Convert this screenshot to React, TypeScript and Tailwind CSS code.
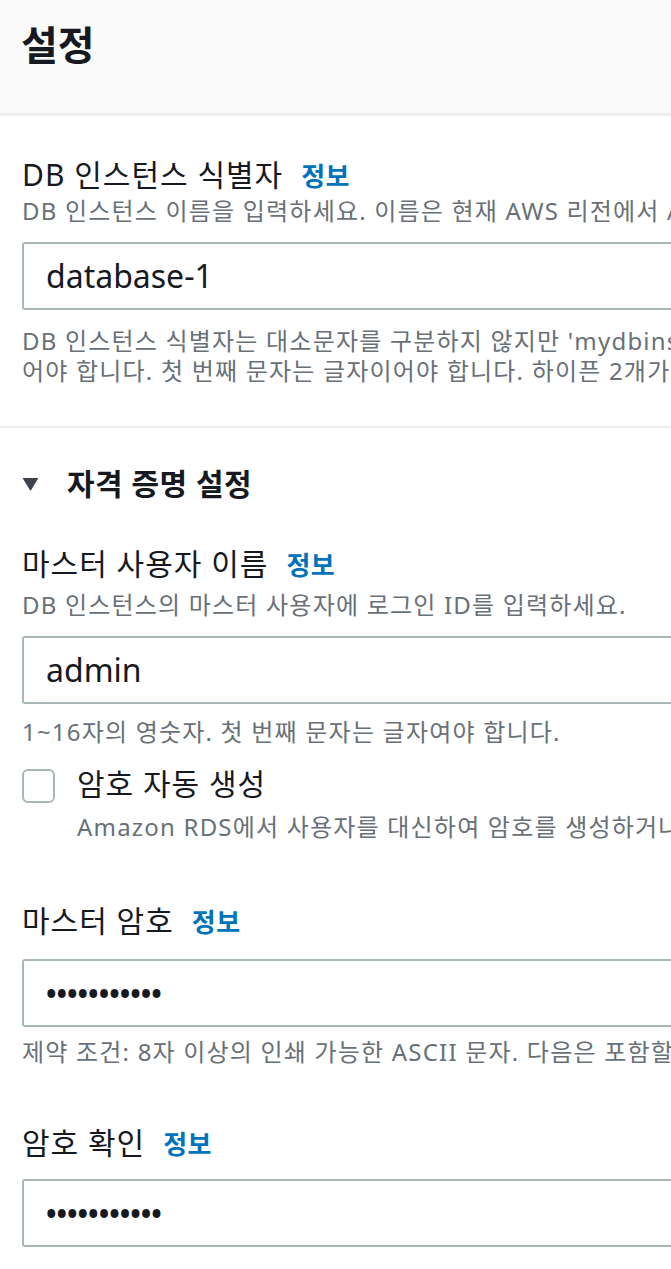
import React from 'react';

const font = { fontFamily: '"Noto Sans", "Noto Sans CJK KR", sans-serif' };

const Info = () => (
  <span className="ml-[18px] text-[26px] tracking-[0.5px] font-bold text-[#0073bb]">정보</span>
);

const Field: React.FC<{ value: string; dots?: boolean }> = ({ value, dots }) => (
  <div className="w-[720px] h-[68px] border-2 border-[#aab7b8] rounded-[3px] bg-white flex items-center pl-[22px]">
    <span
      className={
        dots
          ? 'text-[28px] leading-none text-[#16191f] font-bold'
          : 'text-[32px] leading-none text-[#16191f]'
      }
    >
      {value}
    </span>
  </div>
);

const Label: React.FC<{ children: React.ReactNode; className?: string }> = ({ children, className }) => (
  <div className={`text-[30px] tracking-[1px] leading-[32px] text-[#16191f] flex items-baseline ${className ?? ''}`}>
    {children}
  </div>
);

const Hint: React.FC<{ children: React.ReactNode; className?: string }> = ({ children, className }) => (
  <p className={`text-[24px] tracking-[1.2px] leading-[28px] text-[#687078] ${className ?? ''}`}>{children}</p>
);

export default function App() {
  return (
    <div className="w-[671px] h-[1269px] overflow-hidden bg-white" style={font}>
      <header className="h-[116px] bg-[#fafafa] border-b-[3px] border-[#eeeeee] pl-[21px] pt-[23px]">
        <h1 className="text-[40px] leading-[44px] font-bold text-[#16191f]">설정</h1>
      </header>

      <div className="pl-[22px] whitespace-nowrap">
        <Label className="mt-[43px]">
          DB 인스턴스 식별자 <Info />
        </Label>
        <Hint className="mt-[5px]">
          DB 인스턴스 이름을 입력하세요. 이름은 현재 AWS 리전에서 AWS 계정이 소유하는 모든 DB 인스턴스에 대해 고유해야 합니다.
        </Hint>
        <div className="mt-[17px]">
          <Field value="database-1" />
        </div>
        <Hint className="mt-[16px] leading-[30px]">
          DB 인스턴스 식별자는 대소문자를 구분하지 않지만 'mydbinstance'와 같이 모두 소문자로 저장됩니다.
        </Hint>
        <Hint className="leading-[30px]">
          어야 합니다. 첫 번째 문자는 글자이어야 합니다. 하이픈 2개가 연속될 수 없습니다.
        </Hint>
      </div>

      <div className="mt-[40px] h-[2px] bg-[#eaeded]" />

      <div className="pl-[22px] whitespace-nowrap">
        <div className="mt-[40px] flex items-center text-[30px] tracking-[0.5px] leading-[32px] font-bold text-[#16191f]">
          <svg width="17" height="15" viewBox="0 0 17 15" className="mr-[28px]">
            <path d="M0.5 1 L16.5 1 L8.5 14 Z" fill="#3d4450" />
          </svg>
          자격 증명 설정
        </div>

        <Label className="mt-[48px]">
          마스터 사용자 이름 <Info />
        </Label>
        <Hint className="mt-[10px]">DB 인스턴스의 마스터 사용자에 로그인 ID를 입력하세요.</Hint>
        <div className="mt-[17px]">
          <Field value="admin" />
        </div>
        <Hint className="mt-[14px]">1~16자의 영숫자. 첫 번째 문자는 글자여야 합니다.</Hint>

        <div className="mt-[22px] flex">
          <div className="mt-[1px] w-[33px] h-[34px] border-2 border-[#aab7b8] rounded-[6px] bg-white shrink-0" />
          <div className="ml-[22px]">
            <div className="text-[30px] tracking-[1px] leading-[32px] text-[#16191f]">암호 자동 생성</div>
            <Hint className="mt-[13px]">
              Amazon RDS에서 사용자를 대신하여 암호를 생성하거나 사용자가 직접 암호를 지정할 수 있습니다.
            </Hint>
          </div>
        </div>

        <Label className="mt-[64px]">
          마스터 암호 <Info />
        </Label>
        <div className="mt-[21px]">
          <Field value="•••••••••••" dots />
        </div>
        <Hint className="mt-[11px]">
          제약 조건: 8자 이상의 인쇄 가능한 ASCII 문자. 다음은 포함할 수 없습니다: / (슬래시), '(작은따옴표), "(큰따옴표) 및 @ (앳 기호).
        </Hint>

        <Label className="mt-[61px]">
          암호 확인 <Info />
        </Label>
        <div className="mt-[19px]">
          <Field value="•••••••••••" dots />
        </div>
      </div>
    </div>
  );
}
